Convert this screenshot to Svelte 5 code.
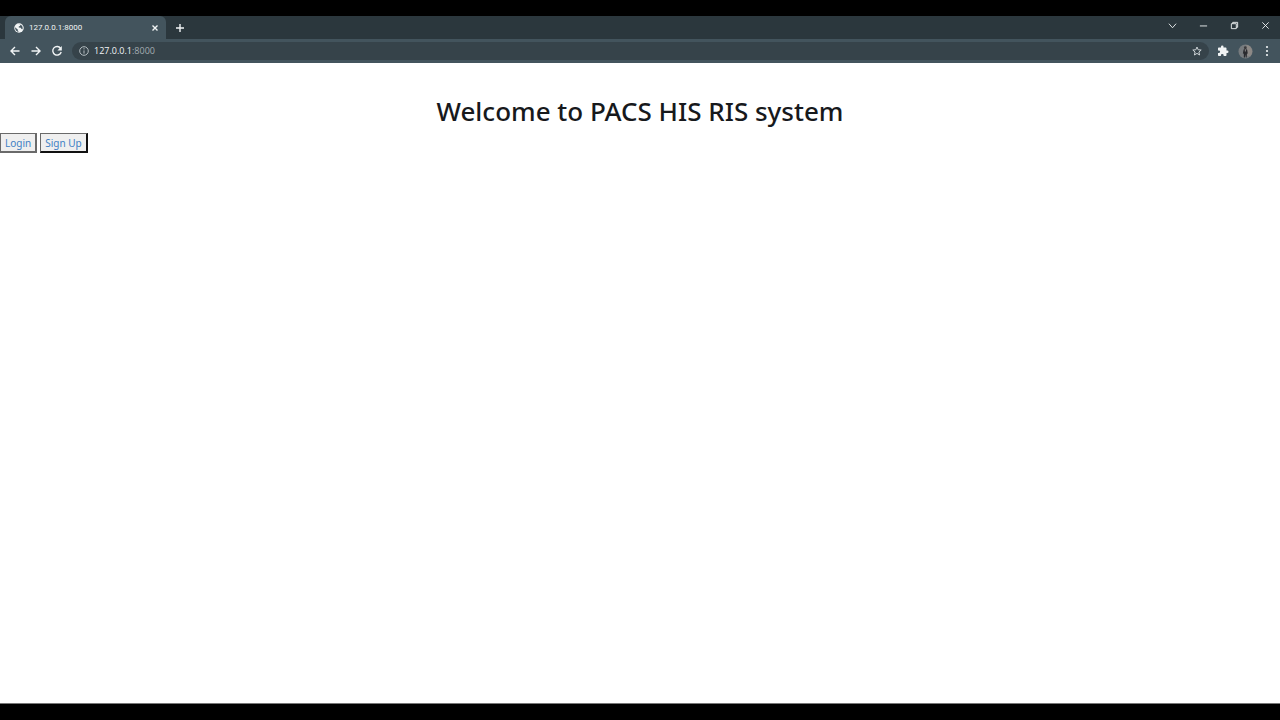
<script lang="ts">
	let title = 'Welcome to PACS HIS RIS system';
	let host = '127.0.0.1';
	let port = ':8000';

	const links = [
		{ name: 'Login', focused: false },
		{ name: 'Sign Up', focused: true }
	];
</script>

<div class="screen">
	<header class="browser">
		<div class="tab-strip">
			<div class="tab">
				<svg class="globe" viewBox="0 0 20 20" aria-hidden="true">
					<circle cx="10" cy="10" r="9.5" fill="#f1f4f5" />
					<path d="M2 8.5 L7.5 13 L7.5 15 L9.5 17.5 C5 17.5 2 13.5 2 8.5 Z" fill="#43545d" />
					<path d="M9 2.5 L13 3 L12 6 L9.5 7 L9.5 9 L13.5 9.5 L15 12 L17 12.5 C18.5 8 15.5 3 11 2.3 Z" fill="#43545d" />
				</svg>
				<span class="tab-title">{host}{port}</span>
				<button class="icon tab-close" aria-label="Close tab">
					<svg viewBox="0 0 10 10"><path d="M2.5 2.5 L7.5 7.5 M7.5 2.5 L2.5 7.5" /></svg>
				</button>
			</div>
			<button class="icon new-tab" aria-label="New tab">
				<svg viewBox="0 0 10 10"><path d="M5 1 V9 M1 5 H9" /></svg>
			</button>
			<div class="window-controls">
				<button class="icon" aria-label="Search tabs">
					<svg class="thin" viewBox="0 0 10 10"><path d="M1 3 L5 7.5 L9 3" /></svg>
				</button>
				<button class="icon" aria-label="Minimize">
					<svg class="thin" viewBox="0 0 10 10"><path d="M1 5.5 H9" /></svg>
				</button>
				<button class="icon" aria-label="Restore">
					<svg class="thin" viewBox="0 0 10 10"><path d="M1.5 3 H7 V8.5 H1.5 Z M3 3 V1.5 H8.5 V7 H7" /></svg>
				</button>
				<button class="icon" aria-label="Close">
					<svg class="thin" viewBox="0 0 10 10"><path d="M1.5 1.5 L8.5 8.5 M8.5 1.5 L1.5 8.5" /></svg>
				</button>
			</div>
		</div>

		<div class="toolbar">
			<nav class="nav">
				<button class="icon" aria-label="Back">
					<svg viewBox="0 0 12 12"><path d="M10.5 6 H2 M6 2 L2 6 L6 10" /></svg>
				</button>
				<button class="icon" aria-label="Forward">
					<svg viewBox="0 0 12 12"><path d="M1.5 6 H10 M6 2 L10 6 L6 10" /></svg>
				</button>
				<button class="icon" aria-label="Reload">
					<svg viewBox="0 0 12 12">
						<path d="M9.6 3.3 A4.3 4.3 0 1 0 10.2 7" />
						<path class="solid" d="M10.8 1 V5.5 H6.4 Z" />
					</svg>
				</button>
			</nav>
			<div class="address">
				<svg class="info" viewBox="0 0 12 12" aria-hidden="true">
					<circle cx="6" cy="6" r="4.3" />
					<path d="M6 5.4 V8.6 M6 3.2 V4.4" />
				</svg>
				<a class="url" href="http://127.0.0.1:8000">{host}<span class="port">{port}</span></a>
				<button class="icon star" aria-label="Bookmark this tab">
					<svg class="thin" viewBox="0 0 12 12">
						<path d="M6 2 L7.2 4.8 L10.2 5 L7.9 7 L8.6 10 L6 8.4 L3.4 10 L4.1 7 L1.8 5 L4.8 4.8 Z" />
					</svg>
				</button>
			</div>
			<div class="actions">
				<button class="icon" aria-label="Extensions">
					<svg viewBox="0 0 24 24">
						<path class="solid" d="M20.5 11H19V7c0-1.1-.9-2-2-2h-4V3.5a2.5 2.5 0 0 0-5 0V5H4c-1.1 0-2 .9-2 2v3.8h1.5a2.7 2.7 0 0 1 0 5.4H2V20c0 1.1.9 2 2 2h3.8v-1.5a2.7 2.7 0 0 1 5.4 0V22H17c1.1 0 2-.9 2-2v-4h1.5a2.5 2.5 0 0 0 0-5z" />
					</svg>
				</button>
				<button class="icon avatar" aria-label="Profile">
					<svg viewBox="0 0 16 16">
						<circle cx="8" cy="8" r="7.5" fill="#777b7e" />
						<path d="M9 1 A7 7 0 0 1 13 13 L10 13 Z" fill="#8d8986" />
						<circle cx="7.8" cy="4" r="1.5" fill="#3b3a3c" />
						<path d="M6 5.8 L7.8 5 L9.8 6 L10.4 10 L9.5 10.5 L9.3 14.5 H8.3 L8 11 L7.4 14.5 H6.2 L6.2 10.5 L5.2 10 Z" fill="#29292d" />
						<path d="M7.8 5.5 V8" stroke="#c2c2c0" stroke-width="0.7" />
					</svg>
				</button>
				<button class="icon" aria-label="Menu">
					<svg viewBox="0 0 12 12">
						<circle class="solid" cx="6" cy="2" r="1.1" />
						<circle class="solid" cx="6" cy="6" r="1.1" />
						<circle class="solid" cx="6" cy="10" r="1.1" />
					</svg>
				</button>
			</div>
		</div>
	</header>

	<main>
		<h1>{title}</h1>
		<div class="links">
			{#each links as link}
				<button class="link" class:focused={link.focused}>{link.name}</button>
			{/each}
		</div>
	</main>
</div>

<style>
	:global(body) {
		margin: 0;
		background: #000;
	}
	.screen {
		display: flex;
		flex-direction: column;
		box-sizing: border-box;
		min-height: 100vh;
		padding: 16px 0;
		background: #000;
		font-family: 'Segoe UI', 'Noto Sans', sans-serif;
	}
	.icon {
		display: flex;
		align-items: center;
		justify-content: center;
		padding: 0;
		border: 0;
		background: none;
	}
	.icon svg {
		width: 12px;
		height: 12px;
		fill: none;
		stroke: #f1f4f5;
		stroke-width: 1.4;
	}
	.icon svg.thin {
		stroke-width: 1;
	}
	.icon .solid {
		fill: #f1f4f5;
		stroke: none;
	}

	/* tabs */
	.tab-strip {
		display: flex;
		height: 23px;
		padding-left: 5px;
		background: #2b373d;
	}
	.tab {
		display: flex;
		align-items: center;
		box-sizing: border-box;
		width: 161px;
		padding: 0 6px 0 9px;
		border-radius: 6px 6px 0 0;
		background: #43545d;
	}
	.globe {
		width: 10px;
		height: 10px;
	}
	.tab-title {
		flex: 1;
		margin-left: 5px;
		color: #f1f4f5;
		font-family: 'Segoe UI', Roboto, sans-serif;
		font-size: 8px;
		line-height: 10px;
	}
	.tab-close svg {
		width: 10px;
		height: 10px;
	}
	.new-tab {
		width: 28px;
	}
	.new-tab svg {
		width: 10px;
		height: 10px;
	}
	.window-controls {
		display: flex;
		gap: 1px;
		margin-left: auto;
	}
	.window-controls .icon {
		width: 30px;
		padding-bottom: 4px;
	}
	.window-controls svg {
		width: 9px;
		height: 9px;
	}

	/* toolbar */
	.toolbar {
		display: flex;
		align-items: center;
		height: 24px;
		background: #43545d;
	}
	.nav {
		display: flex;
		padding: 0 5px 0 4px;
	}
	.nav .icon {
		width: 21px;
	}
	.address {
		display: flex;
		flex: 1;
		align-items: center;
		height: 18px;
		padding: 0 6px;
		border-radius: 9px;
		background: #36434a;
	}
	.info {
		width: 12px;
		height: 12px;
		fill: none;
		stroke: #b5bdc1;
		stroke-width: 1;
	}
	.url {
		flex: 1;
		margin-left: 4px;
		color: #f1f4f5;
		font-family: 'Segoe UI', 'Open Sans', sans-serif;
		font-size: 9px;
		line-height: 12px;
		text-decoration: none;
	}
	.port {
		color: #a3adb2;
	}
	.star svg {
		stroke: #cdd3d6;
	}
	.actions {
		display: flex;
		padding: 0 2px 0 3px;
	}
	.actions .icon {
		width: 22px;
	}
	.actions .avatar svg {
		width: 15px;
		height: 15px;
		stroke: none;
	}

	/* page */
	main {
		flex: 1;
		padding-top: 30px;
		border-bottom: 1px solid #777;
		background: #fff;
	}
	h1 {
		margin: 0;
		color: #17191c;
		font-size: 26px;
		font-weight: 500;
		line-height: 36px;
		text-align: center;
	}
	.links {
		display: flex;
		gap: 3px;
		margin-top: 4px;
	}
	.link {
		height: 20px;
		padding: 0 4px;
		border: solid #6a6a6a;
		border-width: 1px 2px 2px 1px;
		background: #efefef;
		color: #4080c4;
		font-family: inherit;
		font-size: 10px;
		line-height: 16px;
	}
	.link.focused {
		border-color: #6a6a6a #111 #111 #6a6a6a;
	}
</style>
